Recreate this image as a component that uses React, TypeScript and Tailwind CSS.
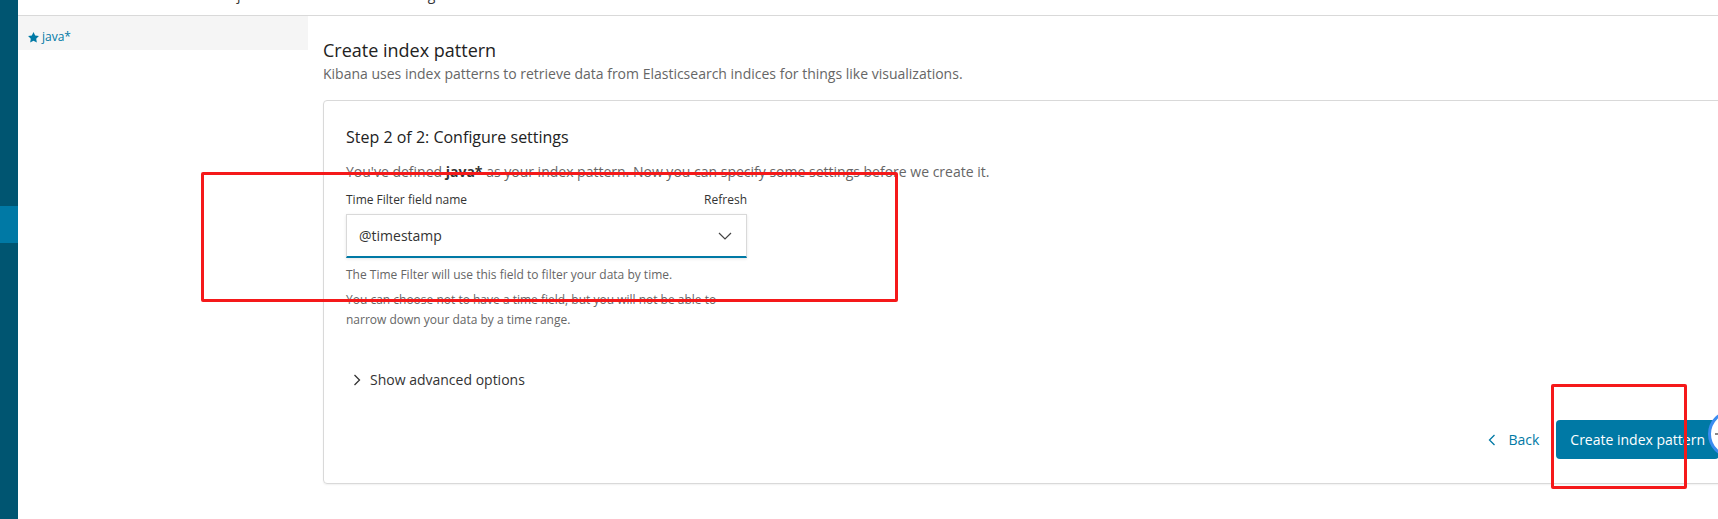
import React from 'react';

const Star = () => (
  <svg viewBox="0 0 24 24" className="w-[13px] h-[13px] mr-[2px]" fill="#0079a5">
    <path d="M12 2l3.09 6.26L22 9.27l-5 4.87 1.18 6.88L12 17.77l-6.18 3.25L7 14.14 2 9.27l6.91-1.01L12 2z" />
  </svg>
);

const App = () => {
  return (
    <div className="relative w-[1718px] h-[519px] overflow-hidden flex bg-white font-['Open_Sans',sans-serif]">
      {/* Left global nav */}
      <div className="w-[18px] shrink-0 bg-[#005571] flex flex-col">
        <div className="h-[206px]" />
        <div className="h-[37px] bg-[#0079a5]" />
      </div>

      <div className="flex-1 flex flex-col min-w-0">
        {/* Top tabs (scrolled mostly out of view) */}
        <div className="h-[16px] border-b border-[#d9d9d9] overflow-hidden shrink-0">
          <div className="flex gap-[56px] pl-[6px] mt-[-15px] text-[14px] leading-[20px] text-[#333]">
            <span>Index Patterns</span>
            <span>Saved Objects</span>
            <span>Advanced Settings</span>
          </div>
        </div>

        <div className="flex flex-1">
          {/* Index pattern list */}
          <div className="w-[290px] shrink-0">
            <div className="h-[34px] bg-[#f5f5f5] pl-[9px] pt-[13px] flex items-start">
              <div className="flex items-center text-[12px] leading-[16px] text-[#0079a5]">
                <Star />
                <span>java*</span>
              </div>
            </div>
          </div>

          {/* Main content */}
          <div className="w-[1434px] shrink-0 pl-[15px] pt-[22px] flex flex-col">
            <h1 className="text-[18px] leading-[24px] text-[#222]">Create index pattern</h1>
            <p className="mt-[2px] text-[14px] leading-[20px] text-[#666]">
              Kibana uses index patterns to retrieve data from Elasticsearch indices for things like visualizations.
            </p>

            <div className="mt-[16px] w-[1419px] border border-[#d9d9d9] rounded-[4px] shadow-[0_1px_2px_rgba(0,0,0,0.06)] px-[22px] pt-[24px] pb-[24px]">
              <h2 className="text-[16px] leading-[24px] text-[#222]">Step 2 of 2: Configure settings</h2>
              <p className="mt-[13px] text-[14px] leading-[20px] text-[#666]">
                You've defined <strong className="font-bold text-[#333]">java*</strong> as your index pattern. Now you can specify some settings before we create it.
              </p>

              <div className="mt-[10px] w-[401px]">
                <div className="flex justify-between text-[12px] leading-[16px] text-[#333] mb-[6px]">
                  <span>Time Filter field name</span>
                  <span>Refresh</span>
                </div>
                <div className="h-[44px] border border-[#d9d9d9] border-b-2 border-b-[#0079a5] bg-white shadow-[0_1px_3px_rgba(0,0,0,0.1)] pl-[12px] pr-[14px] flex items-center justify-between text-[14px] text-[#333]">
                  <span>@timestamp</span>
                  <svg viewBox="0 0 14 8" className="w-[14px] h-[8px]" fill="none" stroke="#444" strokeWidth="1.2">
                    <polyline points="1,1 7,7 13,1" />
                  </svg>
                </div>
                <p className="mt-[7px] text-[12px] leading-[20px] text-[#666]">
                  The Time Filter will use this field to filter your data by time.
                </p>
                <p className="mt-[5px] text-[12px] leading-[20px] text-[#666]">
                  You can choose not to have a time field, but you will not be able to narrow down your data by a time range.
                </p>
              </div>

              <div className="mt-[40px] flex items-center text-[14px] leading-[20px] text-[#333]">
                <svg viewBox="0 0 8 12" className="w-[8px] h-[12px] ml-[7px] mr-[9px]" fill="none" stroke="#333" strokeWidth="1.3">
                  <polyline points="1.5,1 6.5,6 1.5,11" />
                </svg>
                <span>Show advanced options</span>
              </div>

              <div className="mt-[30px] flex justify-end items-center">
                <button className="flex items-center text-[14px] leading-[20px] text-[#0079a5]">
                  <svg viewBox="0 0 8 12" className="w-[8px] h-[12px] mr-[12px]" fill="none" stroke="#0079a5" strokeWidth="1.3">
                    <polyline points="6.5,1 1.5,6 6.5,11" />
                  </svg>
                  Back
                </button>
                <button className="ml-[17px] h-[39px] px-[14px] rounded-[4px] bg-[#0079a5] text-white text-[14px] leading-[20px] whitespace-nowrap">
                  Create index pattern
                </button>
              </div>
            </div>
          </div>
        </div>
      </div>

      {/* Annotation boxes */}
      <div className="absolute left-[201px] top-[172px] w-[697px] h-[130px] border-[3px] border-[#f5191a] rounded-[2px]" />
      <div className="absolute left-[1551px] top-[384px] w-[136px] h-[105px] border-[3px] border-[#f5191a] rounded-[2px]" />

      {/* Floating help bubble, cut off at the edge */}
      <div className="absolute left-[1708px] top-[410px] w-[48px] h-[48px] rounded-full bg-white border-[3px] border-[#3b8cf0] flex items-center justify-start pl-[4px]">
        <div className="w-[6px] h-[2px] bg-[#888]" />
      </div>
    </div>
  );
};

export default App;
